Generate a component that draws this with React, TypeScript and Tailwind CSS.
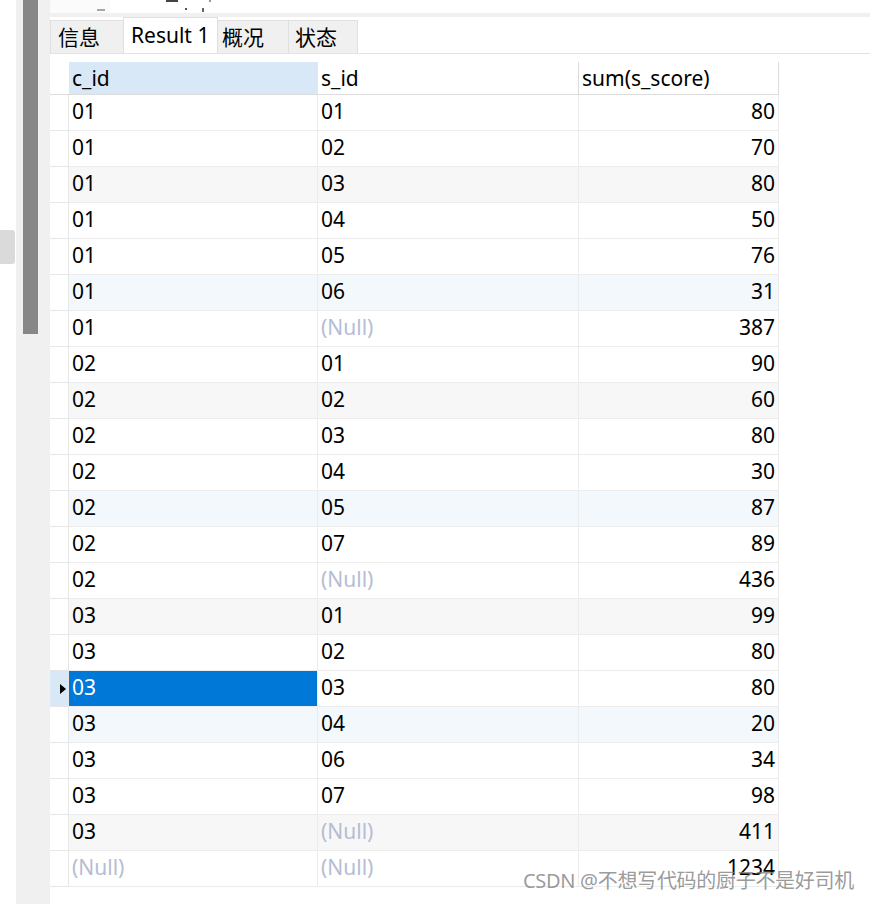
import React from "react";

type Row = { c: string | null; s: string | null; sum: string };

const rows: Row[] = [
  { c: "01", s: "01", sum: "80" },
  { c: "01", s: "02", sum: "70" },
  { c: "01", s: "03", sum: "80" },
  { c: "01", s: "04", sum: "50" },
  { c: "01", s: "05", sum: "76" },
  { c: "01", s: "06", sum: "31" },
  { c: "01", s: null, sum: "387" },
  { c: "02", s: "01", sum: "90" },
  { c: "02", s: "02", sum: "60" },
  { c: "02", s: "03", sum: "80" },
  { c: "02", s: "04", sum: "30" },
  { c: "02", s: "05", sum: "87" },
  { c: "02", s: "07", sum: "89" },
  { c: "02", s: null, sum: "436" },
  { c: "03", s: "01", sum: "99" },
  { c: "03", s: "02", sum: "80" },
  { c: "03", s: "03", sum: "80" },
  { c: "03", s: "04", sum: "20" },
  { c: "03", s: "06", sum: "34" },
  { c: "03", s: "07", sum: "98" },
  { c: "03", s: null, sum: "411" },
  { c: null, s: null, sum: "1234" },
];

const SELECTED = 16;

function rowBg(i: number) {
  if (i % 6 === 2) return "bg-[#f7f7f7]";
  if (i % 6 === 5) return "bg-[#f3f8fd]";
  return "bg-white";
}

function Val({ v }: { v: string | null }) {
  if (v === null) return <span className="text-[#b6bdd3]">(Null)</span>;
  return <span>{v}</span>;
}

export default function App() {
  return (
    <div
      className="w-[870px] h-[904px] flex bg-white overflow-hidden text-black"
      style={{ fontFamily: '"Noto Sans", "Noto Sans CJK SC", sans-serif' }}
    >
      {/* left gutter */}
      <div className="w-[16px] flex flex-col">
        <div className="h-[230px]" />
        <div className="h-[34px] w-[15px] bg-[#dadada] rounded-r-[3px]" />
      </div>
      <div className="w-[34px] bg-[#f0f0f0] pl-[7px]">
        <div className="w-[15px] h-[334px] bg-[#878787]" />
      </div>

      {/* main */}
      <div className="flex-1 flex flex-col relative">
        {/* editor strip */}
        <div className="h-[13px] relative bg-white">
          <div className="absolute left-0 top-0 w-[60px] h-[13px] bg-[#fbfbfb]" />
          <div className="absolute left-[47px] top-[9px] w-[8px] h-[2px] bg-[#a8a8a8]" />
          <div className="absolute left-[116px] top-0 w-[12px] h-[2px] bg-[#444]" />
          <div className="absolute left-[135px] top-[8px] w-[2px] h-[2px] bg-[#555]" />
          <div className="absolute left-[152px] top-[8px] w-[2px] h-[4px] bg-[#666]" />
          <div className="absolute left-[159px] top-0 w-[2px] h-[2px] bg-[#999]" />
        </div>
        <div className="h-[4px] bg-[#f0f0f0]" />

        {/* tabs */}
        <div className="h-[37px] flex items-end border-b border-[#e3e3e3] text-[21px] leading-none">
          <div className="w-[73px] h-[33px] bg-[#f0f0f0] border-t border-l border-[#e0e0e0] pl-[7px] flex items-center">
            信息
          </div>
          <div className="w-[95px] h-[36px] bg-white border-t border-l border-r border-[#e0e0e0] pl-[7px] flex items-center">
            Result 1
          </div>
          <div className="w-[70px] h-[33px] bg-[#f0f0f0] border-t border-[#e0e0e0] pl-[4px] flex items-center">
            概况
          </div>
          <div className="w-[70px] h-[33px] bg-[#f0f0f0] border-t border-l border-r border-[#e0e0e0] pl-[6px] flex items-center">
            状态
          </div>
        </div>

        <div className="h-[8px]" />

        {/* grid */}
        <div className="grid grid-cols-[19px_249px_261px_200px] text-[21px] leading-none">
          <div className="h-[33px] border-b border-[#dcdcdc]" />
          <div className="h-[33px] border-b border-[#dcdcdc] bg-[#d9e8f7] px-[3px] flex items-center">
            c_id
          </div>
          <div className="h-[33px] border-b border-r border-[#dcdcdc] px-[3px] flex items-center">
            s_id
          </div>
          <div className="h-[33px] border-b border-r border-[#dcdcdc] px-[3px] flex items-center">
            sum(s_score)
          </div>

          {rows.map((r, i) => {
            const sel = i === SELECTED;
            const bg = rowBg(i);
            return (
              <React.Fragment key={i}>
                <div
                  className={`h-[36px] border-b border-r border-[#e6e6e6] flex items-center justify-end pr-[2px] ${
                    sel ? "bg-[#d9e8f7]" : "bg-white"
                  }`}
                >
                  {sel && (
                    <svg width="6" height="10" viewBox="0 0 6 10">
                      <path d="M0 0 L6 5 L0 10 Z" fill="#000" />
                    </svg>
                  )}
                </div>
                <div
                  className={`h-[36px] border-b border-r border-[#ececec] px-[3px] pb-[3px] flex items-center ${
                    sel ? "bg-[#0078d7] text-white" : bg
                  }`}
                >
                  <Val v={r.c} />
                </div>
                <div
                  className={`h-[36px] border-b border-r border-[#ececec] px-[3px] pb-[3px] flex items-center ${bg}`}
                >
                  <Val v={r.s} />
                </div>
                <div
                  className={`h-[36px] border-b border-r border-[#ececec] px-[3px] pb-[3px] flex items-center justify-end ${bg}`}
                >
                  <Val v={r.sum} />
                </div>
              </React.Fragment>
            );
          })}
        </div>

        {/* watermark */}
        <div className="absolute left-[473px] top-[871px] text-[20px] leading-none tracking-[-0.3px] text-[#7f7f7f]/80 whitespace-nowrap">
          CSDN @不想写代码的厨子不是好司机
        </div>
      </div>
    </div>
  );
}
